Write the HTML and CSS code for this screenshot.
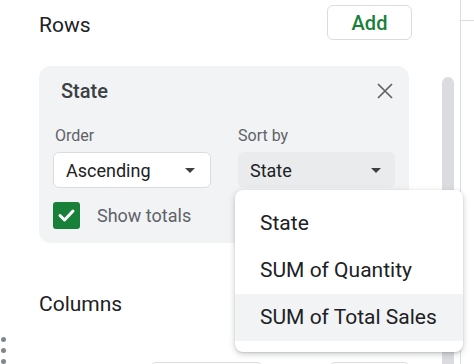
FILE: index.html
```html
<!DOCTYPE html>
<html lang="en">
<head>
    <meta charset="UTF-8">
    <meta name="viewport" content="width=device-width, initial-scale=1.0">
    <title>Pivot table editor</title>
    <link rel="stylesheet" href="styles.css">
</head>
<body>
    <div class="app">
        <div class="panel">
            <!-- Rows section -->
            <div class="section">
                <div class="section-header">
                    <h2>Rows</h2>
                    <button class="add-btn">Add</button>
                </div>

                <div class="field-card">
                    <div class="card-title">
                        <span>State</span>
                        <svg class="close-icon" width="16" height="16" viewBox="0 0 16 16">
                            <path d="M1 1 L15 15 M15 1 L1 15" stroke="#5f6368" stroke-width="1.7" fill="none"/>
                        </svg>
                    </div>
                    <div class="fields">
                        <div class="field">
                            <label>Order</label>
                            <div class="select">
                                <span>Ascending</span>
                                <span class="arrow"></span>
                            </div>
                        </div>
                        <div class="field">
                            <label class="flush">Sort by</label>
                            <div class="select select-open">
                                <span>State</span>
                                <span class="arrow"></span>
                            </div>
                        </div>
                    </div>
                    <div class="check-row">
                        <span class="checkbox">
                            <svg width="27" height="27" viewBox="0 0 27 27">
                                <path d="M7 13.5 L11.5 18 L20 9" stroke="#fff" stroke-width="3" fill="none" stroke-linecap="round" stroke-linejoin="round"/>
                            </svg>
                        </span>
                        <span class="check-label">Show totals</span>
                    </div>
                </div>
            </div>

            <!-- Columns section -->
            <div class="section columns">
                <div class="section-header">
                    <h2>Columns</h2>
                </div>
            </div>

            <div class="chip-row">
                <div class="handle">
                    <span></span><span></span><span></span>
                </div>
                <div class="chip chip-wide"></div>
                <div class="chip chip-small"></div>
            </div>

            <div class="scroll-thumb"></div>
        </div>
        <div class="side-strip"></div>

        <!-- Sort by menu -->
        <ul class="menu">
            <li>State</li>
            <li>SUM of Quantity</li>
            <li class="active">SUM of Total Sales</li>
        </ul>
    </div>
</body>
</html>
```

FILE: styles.css
```css
* {
    margin: 0;
    padding: 0;
    box-sizing: border-box;
    font-family: Roboto, "Liberation Sans", Arial, sans-serif;
}

body {
    background: white;
    color: #202124;
}

.app {
    position: relative;
    display: flex;
    width: 474px;
    height: 364px;
    overflow: hidden;
}

.panel {
    position: relative;
    width: 461px;
    height: 364px;
    border-right: 1px solid #dadce0;
    overflow: hidden;
}

.side-strip {
    flex: 1;
    margin-top: 20px;
    border-top: 1px solid #dadce0;
}

.section {
    padding-left: 39px;
    width: 412px;
}

.section-header {
    display: flex;
    justify-content: space-between;
    align-items: center;
    height: 35px;
    margin-top: 5px;
}

.section-header h2 {
    font-size: 21px;
    font-weight: 400;
    color: #202124;
    padding-top: 5px;
}

.add-btn {
    width: 85px;
    height: 35px;
    background: white;
    border: 1px solid #dadce0;
    border-radius: 6px;
    color: #188038;
    font-size: 20px;
    font-weight: 500;
}

.field-card {
    width: 370px;
    margin-top: 26px;
    background: #f1f3f4;
    border-radius: 12px;
    padding: 0 14px 14px 14px;
}

.card-title {
    display: flex;
    justify-content: space-between;
    align-items: center;
    height: 50px;
    padding-left: 8px;
    padding-right: 2px;
    font-size: 20px;
    font-weight: 500;
    color: #3c4043;
}

.fields {
    display: grid;
    grid-template-columns: 158px 157px;
    gap: 27px;
    margin-top: 10px;
}

.field label {
    display: block;
    font-size: 16px;
    line-height: 20px;
    color: #5f6368;
    padding-left: 2px;
    margin-bottom: 6px;
}

.field label.flush {
    padding-left: 0;
}

.select {
    display: flex;
    justify-content: space-between;
    align-items: center;
    height: 36px;
    padding: 0 15px 0 12px;
    background: white;
    border: 1px solid #dadce0;
    border-radius: 6px;
    font-size: 18px;
    color: #202124;
}

.select-open {
    background: #eaebec;
    border-color: transparent;
    padding-left: 11px;
    padding-right: 13px;
}

.arrow {
    width: 0;
    height: 0;
    border-left: 5px solid transparent;
    border-right: 5px solid transparent;
    border-top: 5px solid #3c4043;
}

.check-row {
    display: flex;
    align-items: center;
    gap: 17px;
    margin-top: 14px;
}

.checkbox {
    width: 27px;
    height: 27px;
    background: #188038;
    border-radius: 3px;
}

.checkbox svg {
    display: block;
}

.check-label {
    font-size: 18px;
    color: #5f6368;
}

.columns .section-header {
    margin-top: 41px;
}

.chip-row {
    display: flex;
    align-items: flex-start;
    margin-top: 18px;
}

.handle {
    display: flex;
    flex-direction: column;
    gap: 6px;
    margin-left: 1px;
}

.handle span {
    width: 5px;
    height: 5px;
    border-radius: 50%;
    background: #80868b;
}

.chip {
    height: 30px;
    margin-top: 25px;
    border: 1px solid #dadce0;
    border-radius: 6px;
    background: white;
}

.chip-wide {
    width: 113px;
    margin-left: 144px;
}

.chip-small {
    width: 81px;
    margin-left: 66px;
}

/* scrollbar thumb sits over the panel */
.scroll-thumb {
    position: absolute;
    left: 442px;
    top: 77px;
    width: 12px;
    height: 320px;
    border-radius: 6px;
    background: #dadce0;
}

.menu {
    position: absolute;
    left: 235px;
    top: 190px;
    width: 228px;
    padding: 10px 0 11px 0;
    list-style: none;
    background: white;
    border-radius: 8px;
    box-shadow: 0 2px 6px rgba(60, 64, 67, 0.25), 0 1px 2px rgba(60, 64, 67, 0.15);
}

.menu li {
    height: 47px;
    line-height: 47px;
    padding-left: 25px;
    font-size: 21px;
    color: #202124;
}

.menu li.active {
    background: #f1f3f4;
}
```
